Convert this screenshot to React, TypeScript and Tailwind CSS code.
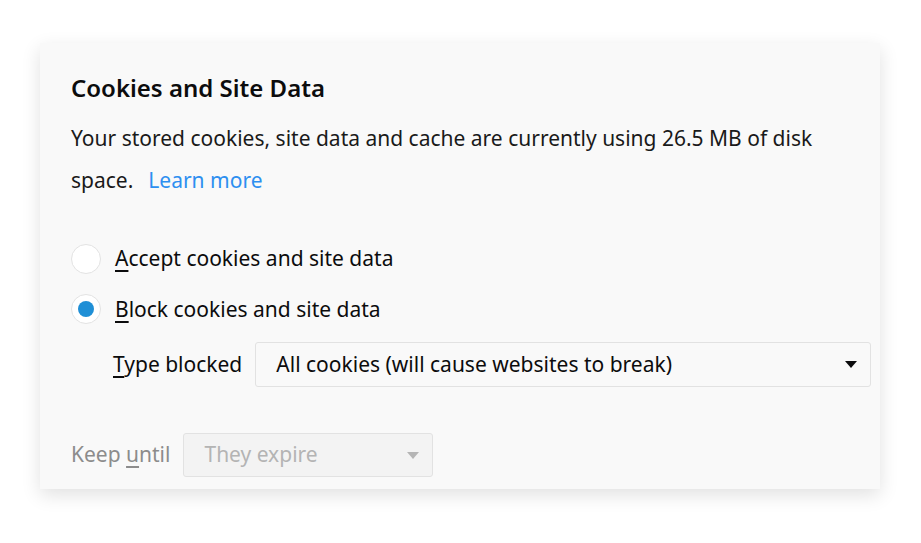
import type { ReactNode } from "react";

function Radio({ checked }: { checked?: boolean }) {
  return (
    <span className="flex h-[30px] w-[30px] shrink-0 items-center justify-center rounded-full border border-[#e3e3e3] bg-white">
      {checked && <span className="h-[16px] w-[16px] rounded-full bg-[#1f8fd6]" />}
    </span>
  );
}

function Caret({ muted }: { muted?: boolean }) {
  return (
    <svg width="12" height="7" viewBox="0 0 12 7" className={muted ? "fill-[#b5b5b5]" : "fill-[#0c0c0d]"}>
      <path d="M0 0h12L6 7z" />
    </svg>
  );
}

function Select({ children, className, muted }: { children: ReactNode; className: string; muted?: boolean }) {
  return (
    <div
      className={`flex shrink-0 items-center justify-between rounded-[3px] border border-[#e2e2e2] pl-[20px] pr-[13px] ${
        muted ? "bg-[#f3f3f3] text-[#b4b4b4]" : "bg-[#f9f9f9] text-[#0c0c0d]"
      } ${className}`}
    >
      <span className="whitespace-nowrap">{children}</span>
      <Caret muted={muted} />
    </div>
  );
}

export default function App() {
  return (
    <div className="min-h-screen bg-white pt-[43px] pl-[40px] font-['Noto_Sans',sans-serif] text-[#0c0c0d]">
      <div className="w-[840px] bg-[#f9f9f9] pl-[31px] pr-[2px] pt-[28px] pb-[12px] shadow-[0_6px_18px_rgba(0,0,0,0.12)]">
        <h1 className="text-[24px] leading-[34px] font-semibold">Cookies and Site Data</h1>
        <p className="mt-[12px] text-[21px] leading-[42px] text-[#1a1a1a]">
          Your stored cookies, site data and cache are currently using 26.5 MB of disk space.
          <a className="ml-[15px] text-[#2d8ff0]">Learn more</a>
        </p>
        <div className="mt-[42px] flex flex-col">
          <label className="flex items-center gap-[14px] text-[21px]">
            <Radio />
            <span>
              <u className="underline-offset-[4px]">A</u>ccept cookies and site data
            </span>
          </label>
          <label className="mt-[19px] flex items-center gap-[14px] text-[21px]">
            <Radio checked />
            <span>
              <u className="underline-offset-[4px]">B</u>lock cookies and site data
            </span>
          </label>
          <div className="mt-[17px] flex items-center gap-[13px] pl-[42px] text-[21px]">
            <span className="whitespace-nowrap">
              <u className="underline-offset-[4px]">T</u>ype blocked
            </span>
            <Select className="h-[45px] w-[616px]">All cookies (will cause websites to break)</Select>
          </div>
        </div>
        <div className="mt-[46px] flex items-center gap-[13px] text-[21px]">
          <span className="whitespace-nowrap text-[#8c8c8c]">
            Keep <u className="underline-offset-[4px]">u</u>ntil
          </span>
          <Select muted className="h-[44px] w-[250px]">They expire</Select>
        </div>
      </div>
    </div>
  );
}
